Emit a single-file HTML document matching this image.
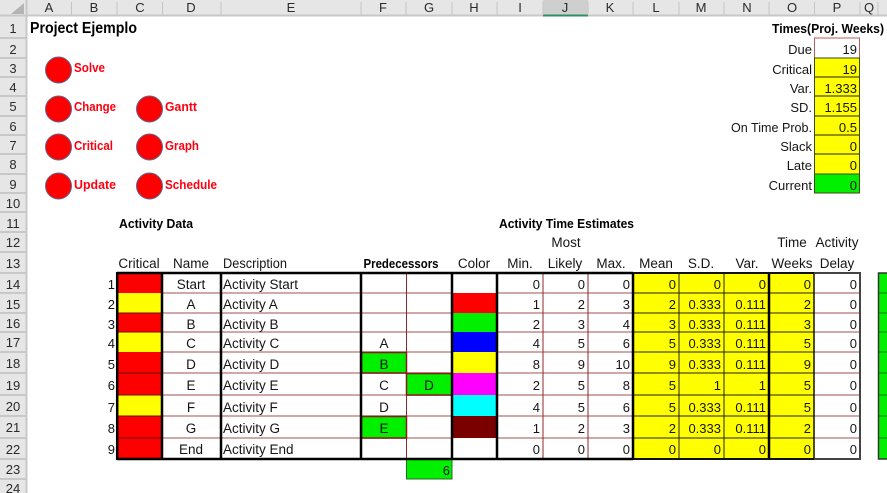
<!DOCTYPE html>
<html><head><meta charset="utf-8"><title>Project Ejemplo</title>
<style>
html,body{margin:0;padding:0;background:#fff;width:887px;height:493px;overflow:hidden}
svg{display:block;filter:blur(.35px)}
text{font-family:"Liberation Sans",sans-serif;font-size:13.5px;fill:#151515}
.b{font-weight:bold;fill:#000;font-size:12.8px}
.r{font-weight:bold;fill:#ff0010;font-size:13px}
.e{text-anchor:end;font-size:13px}
.m{text-anchor:middle}
.h{text-anchor:middle;fill:#2a2a2a;font-size:13px}
.l{stroke:#d0a8a8;stroke-width:2}
.o{stroke:#6b6b10;stroke-width:1.5}
.d{stroke:#8c2a2a;stroke-width:1}
.k{stroke:#000;stroke-width:2.5}
.g{stroke:#c8c8c8;stroke-width:2}
.c{fill:#fe0000;stroke:#5b6a94;stroke-width:1}
</style></head><body>
<svg width="887" height="493" viewBox="0 0 887 493" xmlns="http://www.w3.org/2000/svg">
<rect width="887" height="16" fill="#e6e6e6"/>
<rect y="0" width="26" height="493" fill="#e6e6e6"/>
<rect x="543" y="0" width="45" height="15" fill="#cfcfcf"/>
<path d="M24 3V14H11Z" fill="#b4b4b4"/>
<path class="g" d="M0 15.5H887M26.5 0V493"/>
<path d="M543 15.5H588" stroke="#2f8f5f" stroke-width="2"/>
<path stroke="#c4c4c4" stroke-width="1" d="M71.5 2V15M117 2V15M162.5 2V15M221 2V15M361 2V15M406 2V15M452 2V15M497 2V15M543 2V15M588 2V15M633 2V15M679 2V15M724 2V15M769 2V15M814.5 2V15M860 2V15M878 2V15"/>
<path class="g" d="M0 38H26M0 58H26M0 77H26M0 96H26M0 116H26M0 135H26M0 154H26M0 174H26M0 193H26M0 212H26M0 232H26M0 252H26M0 273H26M0 293H26M0 313H26M0 332H26M0 352H26M0 373H26M0 395H26M0 416H26M0 438H26M0 459H26M0 479H26"/>

<text class="h" x="49" y="12">A</text><text class="h" x="94" y="12">B</text><text class="h" x="140" y="12">C</text><text class="h" x="191" y="12">D</text><text class="h" x="291" y="12">E</text><text class="h" x="383" y="12">F</text><text class="h" x="429" y="12">G</text><text class="h" x="474" y="12">H</text><text class="h" x="520" y="12">I</text><text class="h" x="565" y="12">J</text><text class="h" x="610" y="12">K</text><text class="h" x="656" y="12">L</text><text class="h" x="701" y="12">M</text><text class="h" x="747" y="12">N</text><text class="h" x="792" y="12">O</text><text class="h" x="837" y="12">P</text><text class="h" x="869" y="12">Q</text>

<text class="h" x="13" y="33">1</text><text class="h" x="13" y="54">2</text><text class="h" x="13" y="73">3</text><text class="h" x="13" y="92">4</text><text class="h" x="13" y="111">5</text><text class="h" x="13" y="131">6</text><text class="h" x="13" y="150">7</text><text class="h" x="13" y="169">8</text><text class="h" x="13" y="189">9</text><text class="h" x="13" y="208">10</text><text class="h" x="13" y="228">11</text><text class="h" x="13" y="247">12</text><text class="h" x="13" y="268">13</text><text class="h" x="13" y="289">14</text><text class="h" x="13" y="309">15</text><text class="h" x="13" y="328">16</text><text class="h" x="13" y="347">17</text><text class="h" x="13" y="368">18</text><text class="h" x="13" y="390">19</text><text class="h" x="13" y="411">20</text><text class="h" x="13" y="432">21</text><text class="h" x="13" y="454">22</text><text class="h" x="13" y="474">23</text><text class="h" x="13" y="493">24</text>

<text class="b" x="30" y="33" style="font-size:15.5px" textLength="107" lengthAdjust="spacingAndGlyphs">Project Ejemplo</text>
<text class="b" x="772" y="33" textLength="112" lengthAdjust="spacingAndGlyphs">Times(Proj. Weeks)</text>

<circle class="c" cx="58.5" cy="70" r="13"/><circle class="c" cx="58.5" cy="109" r="13"/><circle class="c" cx="58.5" cy="147" r="13"/><circle class="c" cx="58.5" cy="186" r="13"/>
<circle class="c" cx="149.5" cy="109" r="13"/><circle class="c" cx="149.5" cy="147" r="13"/><circle class="c" cx="149.5" cy="186" r="13"/>
<text class="r" x="74" y="72" textLength="31" lengthAdjust="spacingAndGlyphs">Solve</text>
<text class="r" x="74" y="111" textLength="42" lengthAdjust="spacingAndGlyphs">Change</text>
<text class="r" x="74" y="150" textLength="39" lengthAdjust="spacingAndGlyphs">Critical</text>
<text class="r" x="74" y="189" textLength="42" lengthAdjust="spacingAndGlyphs">Update</text>
<text class="r" x="165" y="111" textLength="32" lengthAdjust="spacingAndGlyphs">Gantt</text>
<text class="r" x="165" y="150" textLength="34" lengthAdjust="spacingAndGlyphs">Graph</text>
<text class="r" x="165" y="189" textLength="52" lengthAdjust="spacingAndGlyphs">Schedule</text>

<!-- Times block -->
<rect x="814.5" y="38" width="45" height="20" fill="#fff" stroke="#b85c5c" stroke-width="1"/>
<rect x="814.5" y="58" width="45" height="116" fill="#ffff00"/>
<rect x="814.5" y="174" width="45" height="19" fill="#00f000"/>
<path class="o" d="M814 77H860M814 96H860M814 116H860M814 135H860M814 154H860"/>
<path stroke="#3a4a10" stroke-width="1" fill="none" d="M814.5 58V193H859.5V58M814 58H860M814 174H860"/>
<g transform="translate(0,1)">
<text class="e" x="812" y="53">Due</text><text class="e" x="812" y="73">Critical</text><text class="e" x="812" y="92">Var.</text><text class="e" x="812" y="111">SD.</text><text class="e" x="812" y="131" textLength="81" lengthAdjust="spacingAndGlyphs">On Time Prob.</text><text class="e" x="812" y="150">Slack</text><text class="e" x="812" y="169">Late</text><text class="e" x="812" y="189">Current</text>
<text class="e" x="857" y="53">19</text><text class="e" x="857" y="73">19</text><text class="e" x="857" y="92">1.333</text><text class="e" x="857" y="111">1.155</text><text class="e" x="857" y="131">0.5</text><text class="e" x="857" y="150">0</text><text class="e" x="857" y="169">0</text><text class="e" x="857" y="189">0</text>
</g>

<!-- Headings -->
<text class="b" x="119" y="228" textLength="74" lengthAdjust="spacingAndGlyphs">Activity Data</text>
<text class="b" x="499" y="228" textLength="135" lengthAdjust="spacingAndGlyphs">Activity Time Estimates</text>
<text class="m" x="566" y="247">Most</text><text class="m" x="792" y="247">Time</text><text class="m" x="837" y="247" textLength="43" lengthAdjust="spacingAndGlyphs">Activity</text>
<text class="m" x="139" y="268">Critical</text><text class="m" x="191" y="268">Name</text><text x="223" y="268" textLength="64" lengthAdjust="spacingAndGlyphs">Description</text>
<text class="b m" x="401" y="268" textLength="75" lengthAdjust="spacingAndGlyphs">Predecessors</text>
<text class="m" x="474" y="268">Color</text><text class="m" x="520" y="268">Min.</text><text class="m" x="565" y="268">Likely</text><text class="m" x="611" y="268">Max.</text><text class="m" x="656" y="268">Mean</text><text class="m" x="701" y="268">S.D.</text><text class="m" x="747" y="268">Var.</text><text class="m" x="792" y="268">Weeks</text><text class="m" x="837" y="268">Delay</text>

<!-- Critical fills -->
<rect x="117" y="273" width="45" height="20" fill="#ff0000"/><rect x="117" y="293" width="45" height="20" fill="#ffff00"/><rect x="117" y="313" width="45" height="19" fill="#ff0000"/><rect x="117" y="332" width="45" height="20" fill="#ffff00"/><rect x="117" y="352" width="45" height="43" fill="#ff0000"/><rect x="117" y="395" width="45" height="21" fill="#ffff00"/><rect x="117" y="416" width="45" height="43" fill="#ff0000"/>
<path stroke="#6b1010" stroke-width="1" d="M117 313H162M117 332H162M117 373H162M117 395H162M117 416H162M117 438H162"/>

<!-- Color fills -->
<rect x="452" y="293" width="45" height="20" fill="#ff0000"/><rect x="452" y="313" width="45" height="19" fill="#00f000"/><rect x="452" y="332" width="45" height="20" fill="#0000ff"/><rect x="452" y="352" width="45" height="21" fill="#ffff00"/><rect x="452" y="373" width="45" height="22" fill="#ff00ff"/><rect x="452" y="395" width="45" height="21" fill="#00ffff"/><rect x="452" y="416" width="45" height="22" fill="#7a0000"/>

<!-- Yellow columns -->
<rect x="633" y="273" width="181" height="186" fill="#ffff00"/>
<!-- Right green -->
<rect x="878" y="273" width="9" height="186" fill="#00f000"/>
<path stroke="#333" stroke-width="1.5" fill="none" d="M887 273H878.5V459H887"/>
<path stroke="#0a7a0a" stroke-width="1" d="M879 293H887M879 313H887M879 332H887M879 352H887M879 373H887M879 395H887M879 416H887M879 438H887"/>

<!-- Row lines -->
<path class="l" d="M163 293H452M163 313H452M163 332H452M163 352H452M163 373H452M163 395H452M163 416H452M163 438H452M497 293H633M497 313H633M497 332H633M497 352H633M497 373H633M497 395H633M497 416H633M497 438H633M814 293H860M814 313H860M814 332H860M814 352H860M814 373H860M814 395H860M814 416H860M814 438H860"/>
<path class="o" d="M633 293H814M633 313H814M633 332H814M633 352H814M633 373H814M633 395H814M633 416H814M633 438H814"/>
<path class="d" d="M406.5 273V459M543 273V459M588 273V459"/>
<path stroke="#222" stroke-width="1" d="M679 273V459M724 273V459"/>

<!-- Predecessor highlights -->
<rect x="361.5" y="352.5" width="45" height="20.5" fill="#00f000" stroke="#8a1a1a" stroke-width="1.5"/>
<rect x="406.5" y="373.5" width="45.5" height="21.5" fill="#00f000" stroke="#8a1a1a" stroke-width="1.5"/>
<rect x="361.5" y="416.5" width="45" height="21.5" fill="#00f000" stroke="#8a1a1a" stroke-width="1.5"/>
<rect x="406.5" y="459.5" width="45.5" height="19.5" fill="#00f000" stroke="#2a6a2a" stroke-width="1"/>

<!-- Heavy borders -->
<path class="k" d="M117 273H633"/>
<path class="k" d="M117 459H633"/>
<path class="k" d="M117.2 272V460M162 272V460M221 272V460M361 272V460M452 272V460M497 272V460M633 272V460M769 272V460"/>
<path stroke="#111" stroke-width="2" d="M633 273H814M633 459H814"/>
<path stroke="#111" stroke-width="1.5" d="M814 273V460"/>
<path stroke="#444" stroke-width="2" fill="none" d="M814 273H860V459H814"/>

<g transform="translate(0,1)">
<!-- Row numbers -->
<text class="e" x="115" y="288">1</text><text class="e" x="115" y="308">2</text><text class="e" x="115" y="328">3</text><text class="e" x="115" y="347">4</text><text class="e" x="115" y="368">5</text><text class="e" x="115" y="389">6</text><text class="e" x="115" y="411">7</text><text class="e" x="115" y="432">8</text><text class="e" x="115" y="453">9</text>

<!-- Names -->
<text class="m" x="191" y="288">Start</text><text class="m" x="191" y="308">A</text><text class="m" x="191" y="328">B</text><text class="m" x="191" y="347">C</text><text class="m" x="191" y="368">D</text><text class="m" x="191" y="389">E</text><text class="m" x="191" y="411">F</text><text class="m" x="191" y="432">G</text><text class="m" x="191" y="453">End</text>

<!-- Descriptions -->
<text x="223" y="288">Activity Start</text><text x="223" y="308">Activity A</text><text x="223" y="328">Activity B</text><text x="223" y="347">Activity C</text><text x="223" y="368">Activity D</text><text x="223" y="389">Activity E</text><text x="223" y="411">Activity F</text><text x="223" y="432">Activity G</text><text x="223" y="453">Activity End</text>

<!-- Predecessors -->
<text class="m" x="384" y="347">A</text><text class="m" x="384" y="368">B</text><text class="m" x="384" y="389">C</text><text class="m" x="429" y="389">D</text><text class="m" x="384" y="411">D</text><text class="m" x="384" y="432">E</text><text class="e" x="450" y="474">6</text>

<!-- Min -->
<text class="e" x="540" y="288">0</text><text class="e" x="540" y="308">1</text><text class="e" x="540" y="328">2</text><text class="e" x="540" y="347">4</text><text class="e" x="540" y="368">8</text><text class="e" x="540" y="389">2</text><text class="e" x="540" y="411">4</text><text class="e" x="540" y="432">1</text><text class="e" x="540" y="453">0</text>
<!-- Likely -->
<text class="e" x="585" y="288">0</text><text class="e" x="585" y="308">2</text><text class="e" x="585" y="328">3</text><text class="e" x="585" y="347">5</text><text class="e" x="585" y="368">9</text><text class="e" x="585" y="389">5</text><text class="e" x="585" y="411">5</text><text class="e" x="585" y="432">2</text><text class="e" x="585" y="453">0</text>
<!-- Max -->
<text class="e" x="630" y="288">0</text><text class="e" x="630" y="308">3</text><text class="e" x="630" y="328">4</text><text class="e" x="630" y="347">6</text><text class="e" x="630" y="368">10</text><text class="e" x="630" y="389">8</text><text class="e" x="630" y="411">6</text><text class="e" x="630" y="432">3</text><text class="e" x="630" y="453">0</text>
<!-- Mean -->
<text class="e" x="676" y="288">0</text><text class="e" x="676" y="308">2</text><text class="e" x="676" y="328">3</text><text class="e" x="676" y="347">5</text><text class="e" x="676" y="368">9</text><text class="e" x="676" y="389">5</text><text class="e" x="676" y="411">5</text><text class="e" x="676" y="432">2</text><text class="e" x="676" y="453">0</text>
<!-- SD -->
<text class="e" x="721" y="288">0</text><text class="e" x="721" y="308">0.333</text><text class="e" x="721" y="328">0.333</text><text class="e" x="721" y="347">0.333</text><text class="e" x="721" y="368">0.333</text><text class="e" x="721" y="389">1</text><text class="e" x="721" y="411">0.333</text><text class="e" x="721" y="432">0.333</text><text class="e" x="721" y="453">0</text>
<!-- Var -->
<text class="e" x="766" y="288">0</text><text class="e" x="766" y="308">0.111</text><text class="e" x="766" y="328">0.111</text><text class="e" x="766" y="347">0.111</text><text class="e" x="766" y="368">0.111</text><text class="e" x="766" y="389">1</text><text class="e" x="766" y="411">0.111</text><text class="e" x="766" y="432">0.111</text><text class="e" x="766" y="453">0</text>
<!-- Weeks -->
<text class="e" x="811" y="288">0</text><text class="e" x="811" y="308">2</text><text class="e" x="811" y="328">3</text><text class="e" x="811" y="347">5</text><text class="e" x="811" y="368">9</text><text class="e" x="811" y="389">5</text><text class="e" x="811" y="411">5</text><text class="e" x="811" y="432">2</text><text class="e" x="811" y="453">0</text>
<!-- Delay -->
<text class="e" x="857" y="288">0</text><text class="e" x="857" y="308">0</text><text class="e" x="857" y="328">0</text><text class="e" x="857" y="347">0</text><text class="e" x="857" y="368">0</text><text class="e" x="857" y="389">0</text><text class="e" x="857" y="411">0</text><text class="e" x="857" y="432">0</text><text class="e" x="857" y="453">0</text>
</g>
</svg>
</body></html>
